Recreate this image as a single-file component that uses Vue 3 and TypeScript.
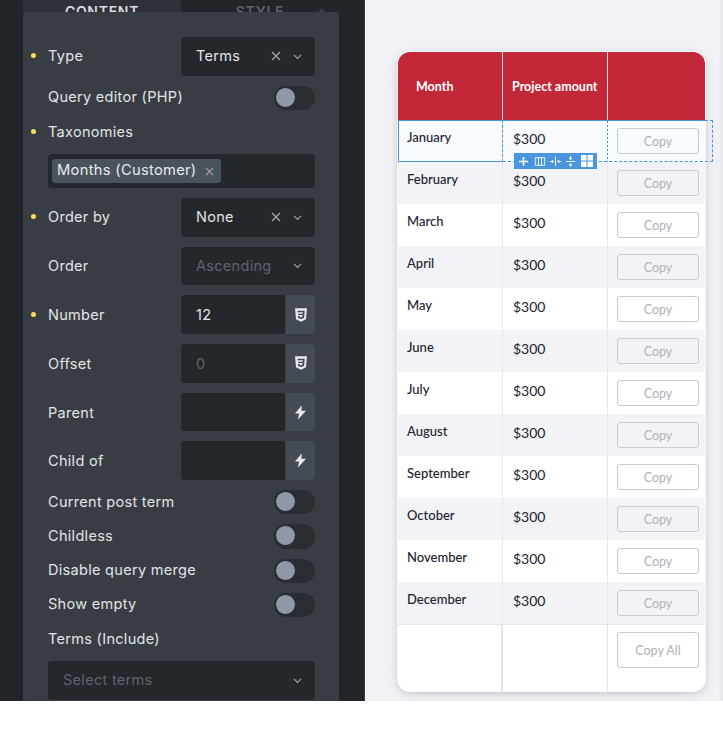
<script setup lang="ts">
const months: string[] = ['January','February','March','April','May','June','July','August','September','October','November','December']
</script>

<template>
  <div class="page">
    <aside class="side">
      <div class="tabs">
        <div class="tab active">CONTENT</div>
        <div class="tab">STYLE</div>
        <i class="notch"></i>
      </div>
      <div class="panel">
        <div class="row ctl-row dot"><label>Type</label>
          <div class="select"><span>Terms</span>
            <svg class="x" viewBox="0 0 10 10"><path d="M1 1l8 8M9 1l-8 8"/></svg>
            <svg class="chev" viewBox="0 0 10 6"><path d="M1 1l4 4 4-4"/></svg>
          </div>
        </div>
        <div class="row tog-row"><label>Query editor (PHP)</label><div class="toggle"><b></b></div></div>
        <div class="row tog-row dot"><label>Taxonomies</label></div>
        <div class="tags">
          <span class="tag">Months (Customer)
            <svg class="x tagx" viewBox="0 0 10 10"><path d="M1 1l8 8M9 1l-8 8"/></svg>
          </span>
        </div>
        <div class="row ctl-row dot"><label>Order by</label>
          <div class="select"><span>None</span>
            <svg class="x" viewBox="0 0 10 10"><path d="M1 1l8 8M9 1l-8 8"/></svg>
            <svg class="chev" viewBox="0 0 10 6"><path d="M1 1l4 4 4-4"/></svg>
          </div>
        </div>
        <div class="row ctl-row"><label>Order</label>
          <div class="select"><span class="muted">Ascending</span>
            <svg class="chev" viewBox="0 0 10 6"><path d="M1 1l4 4 4-4"/></svg>
          </div>
        </div>
        <div class="row ctl-row num dot"><label>Number</label>
          <div class="input"><span>12</span><div class="addon">
            <svg class="css" viewBox="0 0 14 16"><path fill-rule="evenodd" d="M0 0h14l-1.200 13L7 16l-5.800-3zM3 3l.2 1.800h6l-.2 1.600H3.500l.2 1.700h5.100l-.2 2-1.600.6-1.700-.6-.1-1H3.300l.2 2.400L7 12.800l3.600-1.300.7-8.500z"/></svg>
          </div></div>
        </div>
        <div class="row ctl-row num"><label>Offset</label>
          <div class="input"><span class="muted">0</span><div class="addon">
            <svg class="css" viewBox="0 0 14 16"><path fill-rule="evenodd" d="M0 0h14l-1.200 13L7 16l-5.800-3zM3 3l.2 1.800h6l-.2 1.600H3.500l.2 1.700h5.100l-.2 2-1.600.6-1.700-.6-.1-1H3.300l.2 2.400L7 12.800l3.600-1.300.7-8.500z"/></svg>
          </div></div>
        </div>
        <div class="row ctl-row num"><label>Parent</label>
          <div class="input"><span></span><div class="addon">
            <svg class="bolt" viewBox="0 0 12 16"><path d="M7.500 0L0 9h4.500L3 16l9-10H7z"/></svg>
          </div></div>
        </div>
        <div class="row ctl-row num"><label>Child of</label>
          <div class="input"><span></span><div class="addon">
            <svg class="bolt" viewBox="0 0 12 16"><path d="M7.500 0L0 9h4.500L3 16l9-10H7z"/></svg>
          </div></div>
        </div>
        <div class="row tog-row"><label>Current post term</label><div class="toggle"><b></b></div></div>
        <div class="row tog-row"><label>Childless</label><div class="toggle"><b></b></div></div>
        <div class="row tog-row"><label>Disable query merge</label><div class="toggle"><b></b></div></div>
        <div class="row tog-row"><label>Show empty</label><div class="toggle"><b></b></div></div>
        <div class="row tog-row"><label>Terms (Include)</label></div>
        <div class="select wide"><span class="muted">Select terms</span>
          <svg class="chev" viewBox="0 0 10 6"><path d="M1 1l4 4 4-4"/></svg>
        </div>
      </div>
    </aside>

    <main class="canvas">
      <div class="card">
        <div class="head">
          <div class="hc first">Month</div>
          <div class="hc">Project amount</div>
          <div class="hc last"></div>
        </div>
        <div v-for="(m, i) in months" :key="m" class="tr" :class="{ odd: i % 2 === 1, selected: i === 0 }">
          <div class="td month">{{ m }}</div>
          <div class="td amount">$300</div>
          <div class="td action"><button>Copy</button></div>
          <template v-if="i === 0">
            <i class="sel-solid"></i>
            <i class="sel-dash"></i>
            <div class="toolbar">
              <svg viewBox="0 0 12 12"><path class="w2" d="M6 1v10M1 6h10"/></svg>
              <svg viewBox="0 0 14 12"><path class="w1" d="M1.500 1.500h11v9h-11zM5.200 1.500v9M8.800 1.500v9"/></svg>
              <svg viewBox="0 0 12 12"><path class="w1" d="M6 1v10"/><path class="fl" d="M4.500 6L2 4v4zM7.500 6L10 4v4z"/><path class="w1" d="M0 6h2M10 6h2"/></svg>
              <svg viewBox="0 0 12 12"><path class="w1" d="M1 6h10"/><path class="fl" d="M6 4.500L4 2h4zM6 7.500L4 10h4z"/><path class="w1" d="M6 0v2M6 10v2"/></svg>
              <svg viewBox="0 0 12 12"><path class="fl" d="M0 0h5.500v5.500H0zM6.500 0H12v5.500H6.500zM0 6.500h5.500V12H0zM6.500 6.500H12V12H6.500z"/></svg>
            </div>
          </template>
        </div>
        <div class="foot">
          <div class="fc"></div>
          <div class="fc"></div>
          <div class="fc action-all"><button class="all">Copy All</button></div>
        </div>
      </div>
    </main>
  </div>
</template>

<style scoped>
.page { display: flex; height: 701px; overflow: hidden; }
.side { width: 365px; height: 701px; background: #212429; padding-left: 23px; padding-right: 25px; box-sizing: border-box; overflow: hidden; flex: none; border-right: 1px solid #3a3e44; font-family: Inter, sans-serif; }
.tabs { position: relative; display: flex; height: 12px; overflow: hidden; }
.tab { width: 158px; text-align: center; font-size: 14px; font-weight: 600; letter-spacing: 0.7px; line-height: 18px; padding-top: 3px; color: #5d636b; }
.tab.active { background: #2e3238; color: #d9dbde; }
.notch { position: absolute; left: 294px; top: 8px; border-left: 5px solid transparent; border-right: 5px solid transparent; border-bottom: 5px solid #383d44; }
.panel { background: #383d44; border-radius: 4px 4px 0 0; padding: 25px 24px 0 25px; display: flex; flex-direction: column; gap: 10px; height: 689px; box-sizing: border-box; color: #e2e4e7; font-size: 14.500px; letter-spacing: 0.3px; }
.row { display: flex; align-items: center; justify-content: space-between; position: relative; }
.row label, .select span, .input span { padding-bottom: 2px; }
.row.num label, .num .input span { padding-bottom: 0; }
.ctl-row { height: 38.67px; }
.tog-row { height: 24.25px; }
.dot::before { content: ''; position: absolute; left: -17px; top: 50%; margin-top: -3px; width: 5px; height: 5px; border-radius: 50%; background: #f7dc62; }
.select, .input { width: 134px; height: 38.67px; box-sizing: border-box; background: #24272c; border-radius: 4px; display: flex; align-items: center; overflow: hidden; flex: none; }
.select { padding: 0 13px 0 15px; }
.select span { flex: 1; }
.select.wide { width: 267px; height: 39px; }
.input span { flex: 1; padding-left: 15px; }
.muted { color: #5f646c; }
.x { width: 10px; height: 10px; fill: none; stroke: #a3a8af; stroke-width: 1.300; margin-right: 12px; }
.chev { width: 9px; height: 5.400px; fill: none; stroke: #a3a8af; stroke-width: 1.200; }
.addon { width: 30px; height: 100%; background: #454b54; display: flex; align-items: center; justify-content: center; margin-left: auto; flex: none; border-left: 1px solid #383d44; box-sizing: border-box; }
.css { width: 12px; height: 14px; fill: #e7e9ec; }
.bolt { width: 11px; height: 15px; fill: #e7e9ec; }
.toggle { width: 41px; height: 24.25px; border-radius: 12px; background: #292c31; position: relative; flex: none; }
.toggle b { position: absolute; left: 1px; top: 1px; width: 19px; height: 19px; border: 1.500px solid #212429; border-radius: 50%; background: #8e98a6; }
.tags { height: 34px; background: #24272c; border-radius: 4px; padding: 5px 4px; box-sizing: border-box; display: flex; flex: none; }
.tag { height: 24px; background: #4a525c; border-radius: 3px; padding: 0 7px 2px 5px; box-sizing: border-box; display: flex; align-items: center; gap: 8px; color: #e8eaec; font-size: 14.700px; letter-spacing: 0.3px; }
.tagx { margin: 2px 0 0; width: 9px; height: 9px; }

.canvas { flex: 1; background: linear-gradient(to left, #e2e3e8, #f2f3f7 4px); padding: 52px 18px 0 33px; box-sizing: border-box; font-family: Lato, sans-serif; }
.card { width: 307px; height: 639px; border-radius: 12px; background: #fff; box-shadow: 0 0 0 1px #f9fafb, 0 2px 6px rgba(40, 45, 60, 0.2), 0 4px 24px rgba(40, 45, 60, 0.07); position: relative; }
.head { display: grid; grid-template-columns: 105px 105px 97px; height: 68px; background: #c32839; border-radius: 12px 12px 0 0; overflow: hidden; color: #fff; font-size: 12.500px; font-weight: 700; }
.hc { display: flex; align-items: center; padding-left: 9px; border-right: 1px solid #e6d7da; }
.hc.first { padding-left: 18px; }
.hc.last { border-right: 0; }
.tr { display: grid; grid-template-columns: 105px 105px 97px; height: 42px; position: relative; background: #fff; color: #1d2130; }
.tr.odd { background: #f2f3f7; }
.tr.selected { background: #f7fafe; }
.td { border-right: 1px solid #e4e7ed; box-sizing: border-box; }
.month { padding: 9px 0 0 9px; font-size: 13px; font-weight: 500; line-height: 16px; }
.amount { padding: 10px 0 0 10px; font-size: 14px; line-height: 18px; }
.action { border-right: 0; padding: 8px 6px 0 9px; }
button { width: 82px; height: 26px; padding: 0; background: transparent; border: 1px solid #c9cbd2; border-radius: 3px; color: #aeb1b8; font-family: Lato, sans-serif; font-size: 12.500px; }
.sel-solid { position: absolute; left: 0; top: 0; width: 105px; height: 42px; border: 1px solid #4a96dc; border-right: 1px dashed #4a96dc; box-sizing: border-box; }
.sel-dash { position: absolute; left: 105px; top: 0; width: 210px; height: 42px; border: 1px dashed #4a96dc; border-left: 0; box-sizing: border-box; background-image: linear-gradient(#4a96dc 50%, transparent 50%), linear-gradient(#4a96dc, #4a96dc); background-size: 1px 4px, 202px 1px; background-repeat: repeat-y, no-repeat; background-position: 104px 0, 0 -1px; }
.toolbar { position: absolute; left: 116px; top: 33px; width: 83px; height: 16px; background: #4a96dc; display: flex; align-items: center; justify-content: space-around; padding: 0 2px; box-sizing: border-box; z-index: 2; }
.toolbar svg { width: 11px; height: 11px; }
.toolbar svg:last-child { width: 12px; height: 12px; }
.toolbar svg:nth-child(2) { width: 12px; height: 11px; }
.w2 { fill: none; stroke: #fff; stroke-width: 1.700; }
.w1 { fill: none; stroke: #fff; stroke-width: 1; }
.fl { fill: #fff; }
.foot { display: grid; grid-template-columns: 105px 105px 97px; height: 67px; border-top: 1px solid #e2e4ea; box-sizing: border-box; }
.fc { border-right: 2px solid #e3e4e9; }
.fc:nth-child(2) { border-right-width: 1px; }
.action-all { border-right: 0; padding: 7px 6px 0 9px; }
.all { height: 36px; }
</style>

<style>
html, body { margin: 0; background: #fff; }
</style>
